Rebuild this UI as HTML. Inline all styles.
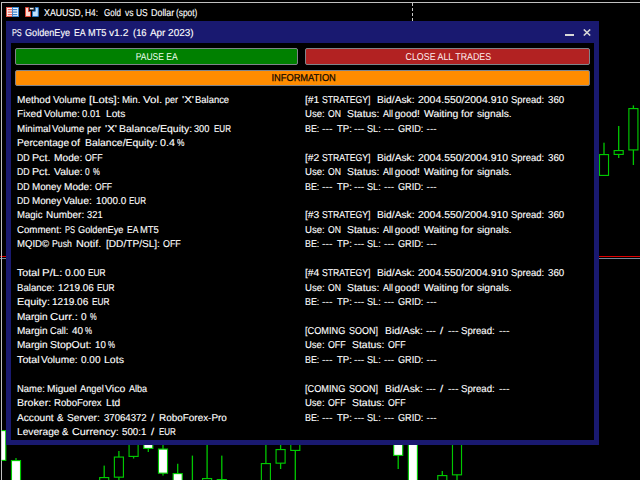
<!DOCTYPE html>
<html><head><meta charset="utf-8">
<style>
html,body{margin:0;padding:0;background:#000;width:640px;height:480px;overflow:hidden;position:relative;font-family:"Liberation Sans",sans-serif;}
.abs{position:absolute;}
#chart{position:absolute;left:0;top:0;width:640px;height:480px;}
#panel{position:absolute;left:6px;top:21px;width:593px;height:424px;background:#191970;}
#inner{position:absolute;left:5px;top:22px;width:583px;height:397px;background:#000;}
.btn{position:absolute;box-sizing:border-box;border:1px solid #80848a;border-radius:2px;font-size:10px;text-align:center;white-space:pre;text-rendering:geometricPrecision;}
.btn span{display:inline-block;}
.txt{position:absolute;font-size:10.0px;line-height:14.44px;color:#fff;white-space:pre;transform-origin:0 0;text-rendering:geometricPrecision;-webkit-text-stroke:0.12px #fff;}
</style></head>
<body>
<svg id="chart" width="640" height="480" viewBox="0 0 640 480" shape-rendering="crispEdges">
  <line x1="412.5" y1="3" x2="412.5" y2="21" stroke="#c8c8c8" stroke-width="1" stroke-dasharray="2.5,2.5"/>
  <rect x="0" y="256" width="640" height="1" fill="#e00000"/>
  <rect x="0" y="258" width="640" height="1" fill="#778899"/>
    <defs><clipPath id="cc"><rect x="1.6" y="3" width="640" height="480"/></clipPath></defs>
  <rect x="1" y="2" width="639" height="1" fill="#c0c0c0"/>
  <rect x="1" y="2" width="1" height="478" fill="#c0c0c0"/>
  <g id="candles" shape-rendering="geometricPrecision" clip-path="url(#cc)">
<rect x="-3.22" y="430.57" width="9.05" height="29.85" fill="#ffffff" stroke="#00c800" stroke-width="1.15"/>
<rect x="15.35" y="458" width="1.3" height="32.00" fill="#00c800"/>
<rect x="11.47" y="460.57" width="9.05" height="28.85" fill="#ffffff" stroke="#00c800" stroke-width="1.15"/>
<rect x="103.55" y="465.6" width="1.3" height="11.40" fill="#00c800"/>
<rect x="99.67" y="477.57" width="9.05" height="11.85" fill="#000000" stroke="#00c800" stroke-width="1.15"/>
<rect x="118.25" y="451" width="1.3" height="39.00" fill="#00c800"/>
<rect x="114.38" y="457.07" width="9.05" height="20.10" fill="#000000" stroke="#00c800" stroke-width="1.15"/>
<rect x="132.95" y="430" width="1.3" height="28.50" fill="#00c800"/>
<rect x="129.07" y="430.57" width="9.05" height="25.85" fill="#000000" stroke="#00c800" stroke-width="1.15"/>
<rect x="147.65" y="430" width="1.3" height="22.00" fill="#00c800"/>
<rect x="143.77" y="430.57" width="9.05" height="17.85" fill="#ffffff" stroke="#00c800" stroke-width="1.15"/>
<rect x="162.35" y="430" width="1.3" height="45.60" fill="#00c800"/>
<rect x="158.47" y="449.07" width="9.05" height="24.10" fill="#ffffff" stroke="#00c800" stroke-width="1.15"/>
<rect x="177.05" y="463.75" width="1.3" height="26.25" fill="#00c800"/>
<rect x="173.17" y="473.57" width="9.05" height="15.85" fill="#ffffff" stroke="#00c800" stroke-width="1.15"/>
<rect x="191.75" y="455.6" width="1.3" height="34.40" fill="#00c800"/>
<rect x="187.87" y="490.57" width="9.05" height="8.85" fill="#000000" stroke="#00c800" stroke-width="1.15"/>
<rect x="206.45" y="430" width="1.3" height="60.00" fill="#00c800"/>
<rect x="202.57" y="478.57" width="9.05" height="10.85" fill="#000000" stroke="#00c800" stroke-width="1.15"/>
<rect x="221.15" y="455.6" width="1.3" height="34.40" fill="#00c800"/>
<rect x="217.27" y="479.57" width="9.05" height="9.85" fill="#000000" stroke="#00c800" stroke-width="1.15"/>
<rect x="265.25" y="430" width="1.3" height="60.00" fill="#00c800"/>
<rect x="261.37" y="463.57" width="9.05" height="25.85" fill="#000000" stroke="#00c800" stroke-width="1.15"/>
<rect x="279.95" y="430" width="1.3" height="39.00" fill="#00c800"/>
<rect x="276.07" y="449.57" width="9.05" height="13.60" fill="#000000" stroke="#00c800" stroke-width="1.15"/>
<rect x="294.65" y="430" width="1.3" height="60.00" fill="#00c800"/>
<rect x="290.77" y="430.57" width="9.05" height="19.85" fill="#000000" stroke="#00c800" stroke-width="1.15"/>
<rect x="397.55" y="430" width="1.3" height="39.00" fill="#00c800"/>
<rect x="393.67" y="430.57" width="9.05" height="24.85" fill="#ffffff" stroke="#00c800" stroke-width="1.15"/>
<rect x="412.25" y="430" width="1.3" height="60.00" fill="#00c800"/>
<rect x="408.37" y="430.57" width="9.05" height="58.85" fill="#ffffff" stroke="#00c800" stroke-width="1.15"/>
<rect x="441.65" y="471" width="1.3" height="19.00" fill="#00c800"/>
<rect x="437.77" y="475.57" width="9.05" height="13.85" fill="#000000" stroke="#00c800" stroke-width="1.15"/>
<rect x="456.35" y="430" width="1.3" height="60.00" fill="#00c800"/>
<rect x="452.47" y="430.57" width="9.05" height="44.25" fill="#000000" stroke="#00c800" stroke-width="1.15"/>
<rect x="603.35" y="142.7" width="1.3" height="33.30" fill="#00c800"/>
<rect x="599.48" y="154.57" width="9.05" height="20.85" fill="#000000" stroke="#00c800" stroke-width="1.15"/>
<rect x="618.05" y="126" width="1.3" height="32.00" fill="#00c800"/>
<rect x="614.17" y="150.57" width="9.05" height="3.85" fill="#000000" stroke="#00c800" stroke-width="1.15"/>
<rect x="632.75" y="105.4" width="1.3" height="59.60" fill="#00c800"/>
<rect x="628.88" y="108.58" width="9.05" height="41.35" fill="#000000" stroke="#00c800" stroke-width="1.15"/>
</g>

</svg>
<!-- top icons -->
<svg class="abs" style="left:6px;top:7px" width="13" height="10" viewBox="0 0 13 10">
  <rect x="0.5" y="0.5" width="6" height="9" fill="#fff0ec" stroke="#e0584c"/>
  <rect x="6.5" y="0.5" width="6" height="9" fill="#e4f2fd" stroke="#3a88d0"/>
  <rect x="1.8" y="2.0" width="4.4" height="1.2" fill="#e8645a"/><rect x="1.8" y="4.5" width="4.4" height="1.2" fill="#e8645a"/><rect x="1.8" y="7.0" width="4.4" height="1.2" fill="#e8645a"/>
  <rect x="7.0" y="2.0" width="4.2" height="1.2" fill="#3a80c8"/><rect x="7.0" y="4.5" width="4.2" height="1.2" fill="#3a80c8"/><rect x="7.0" y="7.0" width="4.2" height="1.2" fill="#3a80c8"/>
</svg>
<svg class="abs" style="left:25px;top:7px" width="14" height="10" viewBox="0 0 14 10">
  <path d="M0.5 0.5 H3.5 V4.5 H5.5 V9.5 H0.5 Z" fill="#fdd8d0" stroke="#e04838"/>
  <rect x="4.3" y="0.3" width="4.8" height="2.6" fill="#505050"/>
  <rect x="5" y="1" width="3.4" height="1.2" fill="#f0f0f0"/>
  <path d="M13.3 0.5 V9.5 H7.5 V4.2 H10.3 V0.5 Z" fill="#c0e0fc" stroke="#2a7ccc"/>
</svg>

<div id="panel">
  <div class="abs" style="left:559px;top:13px;width:9px;height:2px;background:#d8d8d8"></div>
  <svg class="abs" style="left:577px;top:8px" width="8" height="7" viewBox="0 0 8 7"><path d="M0.8 0.5 L7.2 6.5 M7.2 0.5 L0.8 6.5" stroke="#d8d8d8" stroke-width="1.6"/></svg>
  <div id="inner"></div>
</div>

<div class="btn" style="left:15px;top:48px;width:283px;height:17px;background:#008000;color:#f0fff0;line-height:15px"><span style="transform:scaleX(0.85);position:relative;top:0.6px">PAUSE EA</span></div>
<div class="btn" style="left:305px;top:48px;width:285px;height:17px;background:#b22222;color:#fff0f0;line-height:15px"><span style="transform:scaleX(0.885);margin-left:2px;position:relative;top:0.6px">CLOSE ALL TRADES</span></div>
<div class="btn" style="left:15px;top:69.6px;width:575px;height:16px;background:#ff8c00;color:#100800;line-height:16.6px;-webkit-text-stroke:0.25px #100800"><span style="transform:scaleX(0.93);position:relative;top:0.8px;left:1px">INFORMATION</span></div>

<!--TEXT-->
<div class="txt" style="left:16.50px;top:93.90px;transform:scale(1.006,1.0)">Method</div>
<div class="txt" style="left:52.85px;top:93.90px;transform:scale(0.985,1.0)">Volume</div>
<div class="txt" style="left:88.60px;top:93.90px;transform:scale(1.133,1.0)">[Lots]:</div>
<div class="txt" style="left:121.90px;top:93.90px;transform:scale(0.972,1.0)">Min.</div>
<div class="txt" style="left:142.70px;top:93.90px;transform:scale(1.150,1.0)">Vol.</div>
<div class="txt" style="left:164.60px;top:93.90px;transform:scale(0.900,1.0)">per</div>
<div class="txt" style="left:181.85px;top:93.90px;transform:scale(1.150,1.0)">'X'</div>
<div class="txt" style="left:195.35px;top:93.90px;transform:scale(0.944,1.0)">Balance</div>
<div class="txt" style="left:16.50px;top:108.34px;transform:scale(1.021,1.0)">Fixed</div>
<div class="txt" style="left:43.50px;top:108.34px;transform:scale(0.989,1.0)">Volume:</div>
<div class="txt" style="left:82.20px;top:108.34px;transform:scale(0.945,1.0)">0.01</div>
<div class="txt" style="left:105.50px;top:108.34px;transform:scale(1.018,1.0)">Lots</div>
<div class="txt" style="left:16.50px;top:122.78px;transform:scale(0.976,1.0)">Minimal</div>
<div class="txt" style="left:52.20px;top:122.78px;transform:scale(0.967,1.0)">Volume</div>
<div class="txt" style="left:87.30px;top:122.78px;transform:scale(0.960,1.0)">per</div>
<div class="txt" style="left:104.85px;top:122.78px;transform:scale(1.150,1.0)">'X'</div>
<div class="txt" style="left:118.60px;top:122.78px;transform:scale(1.052,1.0)">Balance/Equity:</div>
<div class="txt" style="left:194.35px;top:122.78px;transform:scale(0.921,1.0)">300</div>
<div class="txt" style="left:213.70px;top:122.78px;transform:scale(0.805,1.0)">EUR</div>
<div class="txt" style="left:16.50px;top:137.22px;transform:scale(1.020,1.0)">Percentage</div>
<div class="txt" style="left:71.35px;top:137.22px;transform:scale(1.072,1.0)">of</div>
<div class="txt" style="left:84.60px;top:137.22px;transform:scale(1.042,1.0)">Balance/Equity:</div>
<div class="txt" style="left:160.20px;top:137.22px;transform:scale(1.071,1.0)">0.4</div>
<div class="txt" style="left:177.10px;top:137.22px;transform:scale(0.833,1.0)">%</div>
<div class="txt" style="left:16.70px;top:151.66px;transform:scale(0.873,1.0)">DD</div>
<div class="txt" style="left:32.20px;top:151.66px;transform:scale(1.068,1.0)">Pct.</div>
<div class="txt" style="left:53.50px;top:151.66px;transform:scale(1.019,1.0)">Mode:</div>
<div class="txt" style="left:84.60px;top:151.66px;transform:scale(0.875,1.0)">OFF</div>
<div class="txt" style="left:16.70px;top:166.10px;transform:scale(0.873,1.0)">DD</div>
<div class="txt" style="left:32.20px;top:166.10px;transform:scale(1.068,1.0)">Pct.</div>
<div class="txt" style="left:53.50px;top:166.10px;transform:scale(1.041,1.0)">Value:</div>
<div class="txt" style="left:85.20px;top:166.10px;transform:scale(0.833,1.0)">0</div>
<div class="txt" style="left:92.70px;top:166.10px;transform:scale(0.767,1.0)">%</div>
<div class="txt" style="left:16.70px;top:180.54px;transform:scale(0.873,1.0)">DD</div>
<div class="txt" style="left:31.60px;top:180.54px;transform:scale(0.980,1.0)">Money</div>
<div class="txt" style="left:63.50px;top:180.54px;transform:scale(1.007,1.0)">Mode:</div>
<div class="txt" style="left:94.60px;top:180.54px;transform:scale(0.855,1.0)">OFF</div>
<div class="txt" style="left:16.70px;top:194.98px;transform:scale(0.873,1.0)">DD</div>
<div class="txt" style="left:31.60px;top:194.98px;transform:scale(0.980,1.0)">Money</div>
<div class="txt" style="left:62.85px;top:194.98px;transform:scale(1.046,1.0)">Value:</div>
<div class="txt" style="left:95.50px;top:194.98px;transform:scale(0.987,1.0)">1000.0</div>
<div class="txt" style="left:129.20px;top:194.98px;transform:scale(0.805,1.0)">EUR</div>
<div class="txt" style="left:16.50px;top:209.42px;transform:scale(0.952,1.0)">Magic</div>
<div class="txt" style="left:45.60px;top:209.42px;transform:scale(0.995,1.0)">Number:</div>
<div class="txt" style="left:86.60px;top:209.42px;transform:scale(0.935,1.0)">321</div>
<div class="txt" style="left:16.50px;top:223.86px;transform:scale(0.967,1.0)">Comment:</div>
<div class="txt" style="left:64.70px;top:223.86px;transform:scale(0.750,1.0)">PS</div>
<div class="txt" style="left:77.60px;top:223.86px;transform:scale(0.918,1.0)">GoldenEye</div>
<div class="txt" style="left:126.85px;top:223.86px;transform:scale(0.846,1.0)">EA</div>
<div class="txt" style="left:140.20px;top:223.86px;transform:scale(0.940,1.0)">MT5</div>
<div class="txt" style="left:16.50px;top:238.30px;transform:scale(0.959,1.0)">MQID©</div>
<div class="txt" style="left:51.60px;top:238.30px;transform:scale(0.870,1.0)">Push</div>
<div class="txt" style="left:75.70px;top:238.30px;transform:scale(1.078,1.0)">Notif.</div>
<div class="txt" style="left:105.70px;top:238.30px;transform:scale(1.011,1.0)">[DD/TP/SL]:</div>
<div class="txt" style="left:163.10px;top:238.30px;transform:scale(0.890,1.0)">OFF</div>
<div class="txt" style="left:16.90px;top:267.18px;transform:scale(1.071,1.0)">Total</div>
<div class="txt" style="left:41.90px;top:267.18px;transform:scale(1.147,1.0)">P/L:</div>
<div class="txt" style="left:64.60px;top:267.18px;transform:scale(1.030,1.0)">0.00</div>
<div class="txt" style="left:87.70px;top:267.18px;transform:scale(0.833,1.0)">EUR</div>
<div class="txt" style="left:16.60px;top:281.62px;transform:scale(0.962,1.0)">Balance:</div>
<div class="txt" style="left:57.85px;top:281.62px;transform:scale(0.993,1.0)">1219.06</div>
<div class="txt" style="left:97.10px;top:281.62px;transform:scale(0.833,1.0)">EUR</div>
<div class="txt" style="left:16.60px;top:296.06px;transform:scale(1.075,1.0)">Equity:</div>
<div class="txt" style="left:52.20px;top:296.06px;transform:scale(1.004,1.0)">1219.06</div>
<div class="txt" style="left:91.50px;top:296.06px;transform:scale(0.833,1.0)">EUR</div>
<div class="txt" style="left:16.50px;top:310.50px;transform:scale(1.003,1.0)">Margin</div>
<div class="txt" style="left:50.40px;top:310.50px;transform:scale(1.137,1.0)">Curr.:</div>
<div class="txt" style="left:81.00px;top:310.50px;transform:scale(1.000,1.0)">0</div>
<div class="txt" style="left:89.50px;top:310.50px;transform:scale(0.750,1.0)">%</div>
<div class="txt" style="left:16.50px;top:324.94px;transform:scale(1.003,1.0)">Margin</div>
<div class="txt" style="left:50.20px;top:324.94px;transform:scale(0.920,1.0)">Call:</div>
<div class="txt" style="left:71.80px;top:324.94px;transform:scale(0.991,1.0)">40</div>
<div class="txt" style="left:85.40px;top:324.94px;transform:scale(0.789,1.0)">%</div>
<div class="txt" style="left:16.50px;top:339.38px;transform:scale(1.003,1.0)">Margin</div>
<div class="txt" style="left:49.70px;top:339.38px;transform:scale(1.051,1.0)">StopOut:</div>
<div class="txt" style="left:94.70px;top:339.38px;transform:scale(0.968,1.0)">10</div>
<div class="txt" style="left:107.60px;top:339.38px;transform:scale(0.789,1.0)">%</div>
<div class="txt" style="left:16.50px;top:353.82px;transform:scale(1.076,1.0)">Total</div>
<div class="txt" style="left:41.35px;top:353.82px;transform:scale(1.013,1.0)">Volume:</div>
<div class="txt" style="left:81.00px;top:353.82px;transform:scale(1.000,1.0)">0.00</div>
<div class="txt" style="left:103.50px;top:353.82px;transform:scale(1.053,1.0)">Lots</div>
<div class="txt" style="left:16.50px;top:382.70px;transform:scale(0.943,1.0)">Name:</div>
<div class="txt" style="left:47.20px;top:382.70px;transform:scale(1.014,1.0)">Miguel</div>
<div class="txt" style="left:79.70px;top:382.70px;transform:scale(0.926,1.0)">Angel</div>
<div class="txt" style="left:104.70px;top:382.70px;transform:scale(1.053,1.0)">Vico</div>
<div class="txt" style="left:128.50px;top:382.70px;transform:scale(0.905,1.0)">Alba</div>
<div class="txt" style="left:16.50px;top:397.14px;transform:scale(1.058,1.0)">Broker:</div>
<div class="txt" style="left:54.10px;top:397.14px;transform:scale(0.962,1.0)">RoboForex</div>
<div class="txt" style="left:106.00px;top:397.14px;transform:scale(1.025,1.0)">Ltd</div>
<div class="txt" style="left:16.50px;top:411.58px;transform:scale(1.014,1.0)">Account</div>
<div class="txt" style="left:56.80px;top:411.58px;transform:scale(0.971,1.0)">&amp;</div>
<div class="txt" style="left:66.50px;top:411.58px;transform:scale(1.019,1.0)">Server:</div>
<div class="txt" style="left:103.50px;top:411.58px;transform:scale(0.958,1.0)">37064372</div>
<div class="txt" style="left:150.90px;top:411.58px;transform:scale(1.150,1.0)">/</div>
<div class="txt" style="left:159.00px;top:411.58px;transform:scale(0.993,1.0)">RoboForex-Pro</div>
<div class="txt" style="left:16.50px;top:426.02px;transform:scale(1.019,1.0)">Leverage</div>
<div class="txt" style="left:62.40px;top:426.02px;transform:scale(0.943,1.0)">&amp;</div>
<div class="txt" style="left:72.10px;top:426.02px;transform:scale(1.079,1.0)">Currency:</div>
<div class="txt" style="left:122.20px;top:426.02px;transform:scale(0.976,1.0)">500:1</div>
<div class="txt" style="left:150.90px;top:426.02px;transform:scale(1.150,1.0)">/</div>
<div class="txt" style="left:159.00px;top:426.02px;transform:scale(0.800,1.0)">EUR</div>
<div class="txt" style="left:305.10px;top:93.90px;transform:scale(1.029,1.0)">[#1</div>
<div class="txt" style="left:322.00px;top:93.90px;transform:scale(0.866,1.0)">STRATEGY]</div>
<div class="txt" style="left:377.25px;top:93.90px;transform:scale(1.024,1.0)">Bid/Ask:</div>
<div class="txt" style="left:418.00px;top:93.90px;transform:scale(1.045,1.0)">2004.550/2004.910</div>
<div class="txt" style="left:511.00px;top:93.90px;transform:scale(0.946,1.0)">Spread:</div>
<div class="txt" style="left:548.25px;top:93.90px;transform:scale(0.971,1.0)">360</div>
<div class="txt" style="left:305.10px;top:108.34px;transform:scale(0.960,1.0)">Use:</div>
<div class="txt" style="left:328.20px;top:108.34px;transform:scale(0.860,1.0)">ON</div>
<div class="txt" style="left:347.10px;top:108.34px;transform:scale(1.042,1.0)">Status:</div>
<div class="txt" style="left:382.70px;top:108.34px;transform:scale(0.900,1.0)">All</div>
<div class="txt" style="left:394.80px;top:108.34px;transform:scale(1.000,1.0)">good!</div>
<div class="txt" style="left:423.70px;top:108.34px;transform:scale(1.042,1.0)">Waiting</div>
<div class="txt" style="left:461.25px;top:108.34px;transform:scale(1.042,1.0)">for</div>
<div class="txt" style="left:476.90px;top:108.34px;transform:scale(1.021,1.0)">signals.</div>
<div class="txt" style="left:305.10px;top:122.78px;transform:scale(0.887,1.0)">BE:</div>
<div class="txt" style="left:322.30px;top:122.78px;transform:scale(1.060,1.0)">---</div>
<div class="txt" style="left:336.60px;top:122.78px;transform:scale(0.960,1.0)">TP:</div>
<div class="txt" style="left:354.00px;top:122.78px;transform:scale(1.030,1.0)">---</div>
<div class="txt" style="left:366.60px;top:122.78px;transform:scale(0.913,1.0)">SL:</div>
<div class="txt" style="left:384.10px;top:122.78px;transform:scale(1.000,1.0)">---</div>
<div class="txt" style="left:397.90px;top:122.78px;transform:scale(0.911,1.0)">GRID:</div>
<div class="txt" style="left:426.60px;top:122.78px;transform:scale(1.000,1.0)">---</div>
<div class="txt" style="left:305.10px;top:151.66px;transform:scale(1.029,1.0)">[#2</div>
<div class="txt" style="left:322.00px;top:151.66px;transform:scale(0.866,1.0)">STRATEGY]</div>
<div class="txt" style="left:377.25px;top:151.66px;transform:scale(1.024,1.0)">Bid/Ask:</div>
<div class="txt" style="left:418.00px;top:151.66px;transform:scale(1.045,1.0)">2004.550/2004.910</div>
<div class="txt" style="left:511.00px;top:151.66px;transform:scale(0.946,1.0)">Spread:</div>
<div class="txt" style="left:548.25px;top:151.66px;transform:scale(0.971,1.0)">360</div>
<div class="txt" style="left:305.10px;top:166.10px;transform:scale(0.960,1.0)">Use:</div>
<div class="txt" style="left:328.20px;top:166.10px;transform:scale(0.860,1.0)">ON</div>
<div class="txt" style="left:347.10px;top:166.10px;transform:scale(1.042,1.0)">Status:</div>
<div class="txt" style="left:382.70px;top:166.10px;transform:scale(0.900,1.0)">All</div>
<div class="txt" style="left:394.80px;top:166.10px;transform:scale(1.000,1.0)">good!</div>
<div class="txt" style="left:423.70px;top:166.10px;transform:scale(1.042,1.0)">Waiting</div>
<div class="txt" style="left:461.25px;top:166.10px;transform:scale(1.042,1.0)">for</div>
<div class="txt" style="left:476.90px;top:166.10px;transform:scale(1.021,1.0)">signals.</div>
<div class="txt" style="left:305.10px;top:180.54px;transform:scale(0.887,1.0)">BE:</div>
<div class="txt" style="left:322.30px;top:180.54px;transform:scale(1.060,1.0)">---</div>
<div class="txt" style="left:336.60px;top:180.54px;transform:scale(0.960,1.0)">TP:</div>
<div class="txt" style="left:354.00px;top:180.54px;transform:scale(1.030,1.0)">---</div>
<div class="txt" style="left:366.60px;top:180.54px;transform:scale(0.913,1.0)">SL:</div>
<div class="txt" style="left:384.10px;top:180.54px;transform:scale(1.000,1.0)">---</div>
<div class="txt" style="left:397.90px;top:180.54px;transform:scale(0.911,1.0)">GRID:</div>
<div class="txt" style="left:426.60px;top:180.54px;transform:scale(1.000,1.0)">---</div>
<div class="txt" style="left:305.10px;top:209.42px;transform:scale(1.029,1.0)">[#3</div>
<div class="txt" style="left:322.00px;top:209.42px;transform:scale(0.866,1.0)">STRATEGY]</div>
<div class="txt" style="left:377.25px;top:209.42px;transform:scale(1.024,1.0)">Bid/Ask:</div>
<div class="txt" style="left:418.00px;top:209.42px;transform:scale(1.045,1.0)">2004.550/2004.910</div>
<div class="txt" style="left:511.00px;top:209.42px;transform:scale(0.946,1.0)">Spread:</div>
<div class="txt" style="left:548.25px;top:209.42px;transform:scale(0.971,1.0)">360</div>
<div class="txt" style="left:305.10px;top:223.86px;transform:scale(0.960,1.0)">Use:</div>
<div class="txt" style="left:328.20px;top:223.86px;transform:scale(0.860,1.0)">ON</div>
<div class="txt" style="left:347.10px;top:223.86px;transform:scale(1.042,1.0)">Status:</div>
<div class="txt" style="left:382.70px;top:223.86px;transform:scale(0.900,1.0)">All</div>
<div class="txt" style="left:394.80px;top:223.86px;transform:scale(1.000,1.0)">good!</div>
<div class="txt" style="left:423.70px;top:223.86px;transform:scale(1.042,1.0)">Waiting</div>
<div class="txt" style="left:461.25px;top:223.86px;transform:scale(1.042,1.0)">for</div>
<div class="txt" style="left:476.90px;top:223.86px;transform:scale(1.021,1.0)">signals.</div>
<div class="txt" style="left:305.10px;top:238.30px;transform:scale(0.887,1.0)">BE:</div>
<div class="txt" style="left:322.30px;top:238.30px;transform:scale(1.060,1.0)">---</div>
<div class="txt" style="left:336.60px;top:238.30px;transform:scale(0.960,1.0)">TP:</div>
<div class="txt" style="left:354.00px;top:238.30px;transform:scale(1.030,1.0)">---</div>
<div class="txt" style="left:366.60px;top:238.30px;transform:scale(0.913,1.0)">SL:</div>
<div class="txt" style="left:384.10px;top:238.30px;transform:scale(1.000,1.0)">---</div>
<div class="txt" style="left:397.90px;top:238.30px;transform:scale(0.911,1.0)">GRID:</div>
<div class="txt" style="left:426.60px;top:238.30px;transform:scale(1.000,1.0)">---</div>
<div class="txt" style="left:305.10px;top:267.18px;transform:scale(1.029,1.0)">[#4</div>
<div class="txt" style="left:322.00px;top:267.18px;transform:scale(0.866,1.0)">STRATEGY]</div>
<div class="txt" style="left:377.25px;top:267.18px;transform:scale(1.024,1.0)">Bid/Ask:</div>
<div class="txt" style="left:418.00px;top:267.18px;transform:scale(1.045,1.0)">2004.550/2004.910</div>
<div class="txt" style="left:511.00px;top:267.18px;transform:scale(0.946,1.0)">Spread:</div>
<div class="txt" style="left:548.25px;top:267.18px;transform:scale(0.971,1.0)">360</div>
<div class="txt" style="left:305.10px;top:281.62px;transform:scale(0.960,1.0)">Use:</div>
<div class="txt" style="left:328.20px;top:281.62px;transform:scale(0.860,1.0)">ON</div>
<div class="txt" style="left:347.10px;top:281.62px;transform:scale(1.042,1.0)">Status:</div>
<div class="txt" style="left:382.70px;top:281.62px;transform:scale(0.900,1.0)">All</div>
<div class="txt" style="left:394.80px;top:281.62px;transform:scale(1.000,1.0)">good!</div>
<div class="txt" style="left:423.70px;top:281.62px;transform:scale(1.042,1.0)">Waiting</div>
<div class="txt" style="left:461.25px;top:281.62px;transform:scale(1.042,1.0)">for</div>
<div class="txt" style="left:476.90px;top:281.62px;transform:scale(1.021,1.0)">signals.</div>
<div class="txt" style="left:305.10px;top:296.06px;transform:scale(0.887,1.0)">BE:</div>
<div class="txt" style="left:322.30px;top:296.06px;transform:scale(1.060,1.0)">---</div>
<div class="txt" style="left:336.60px;top:296.06px;transform:scale(0.960,1.0)">TP:</div>
<div class="txt" style="left:354.00px;top:296.06px;transform:scale(1.030,1.0)">---</div>
<div class="txt" style="left:366.60px;top:296.06px;transform:scale(0.913,1.0)">SL:</div>
<div class="txt" style="left:384.10px;top:296.06px;transform:scale(1.000,1.0)">---</div>
<div class="txt" style="left:397.90px;top:296.06px;transform:scale(0.911,1.0)">GRID:</div>
<div class="txt" style="left:426.60px;top:296.06px;transform:scale(1.000,1.0)">---</div>
<div class="txt" style="left:305.30px;top:324.94px;transform:scale(0.919,1.0)">[COMING</div>
<div class="txt" style="left:348.90px;top:324.94px;transform:scale(0.897,1.0)">SOON]</div>
<div class="txt" style="left:384.50px;top:324.94px;transform:scale(1.031,1.0)">Bid/Ask:</div>
<div class="txt" style="left:425.90px;top:324.94px;transform:scale(1.000,1.0)">---</div>
<div class="txt" style="left:439.50px;top:324.94px;transform:scale(1.150,1.0)">/</div>
<div class="txt" style="left:447.50px;top:324.94px;transform:scale(1.060,1.0)">---</div>
<div class="txt" style="left:461.25px;top:324.94px;transform:scale(0.964,1.0)">Spread:</div>
<div class="txt" style="left:498.75px;top:324.94px;transform:scale(1.065,1.0)">---</div>
<div class="txt" style="left:305.30px;top:339.38px;transform:scale(0.950,1.0)">Use:</div>
<div class="txt" style="left:327.80px;top:339.38px;transform:scale(0.880,1.0)">OFF</div>
<div class="txt" style="left:351.50px;top:339.38px;transform:scale(1.042,1.0)">Status:</div>
<div class="txt" style="left:388.10px;top:339.38px;transform:scale(0.875,1.0)">OFF</div>
<div class="txt" style="left:305.10px;top:353.82px;transform:scale(0.887,1.0)">BE:</div>
<div class="txt" style="left:322.30px;top:353.82px;transform:scale(1.060,1.0)">---</div>
<div class="txt" style="left:336.60px;top:353.82px;transform:scale(0.960,1.0)">TP:</div>
<div class="txt" style="left:354.00px;top:353.82px;transform:scale(1.030,1.0)">---</div>
<div class="txt" style="left:366.60px;top:353.82px;transform:scale(0.913,1.0)">SL:</div>
<div class="txt" style="left:384.10px;top:353.82px;transform:scale(1.000,1.0)">---</div>
<div class="txt" style="left:397.90px;top:353.82px;transform:scale(0.911,1.0)">GRID:</div>
<div class="txt" style="left:426.60px;top:353.82px;transform:scale(1.000,1.0)">---</div>
<div class="txt" style="left:305.30px;top:382.70px;transform:scale(0.919,1.0)">[COMING</div>
<div class="txt" style="left:348.90px;top:382.70px;transform:scale(0.897,1.0)">SOON]</div>
<div class="txt" style="left:384.50px;top:382.70px;transform:scale(1.031,1.0)">Bid/Ask:</div>
<div class="txt" style="left:425.90px;top:382.70px;transform:scale(1.000,1.0)">---</div>
<div class="txt" style="left:439.50px;top:382.70px;transform:scale(1.150,1.0)">/</div>
<div class="txt" style="left:447.50px;top:382.70px;transform:scale(1.060,1.0)">---</div>
<div class="txt" style="left:461.25px;top:382.70px;transform:scale(0.964,1.0)">Spread:</div>
<div class="txt" style="left:498.75px;top:382.70px;transform:scale(1.065,1.0)">---</div>
<div class="txt" style="left:305.30px;top:397.14px;transform:scale(0.950,1.0)">Use:</div>
<div class="txt" style="left:327.80px;top:397.14px;transform:scale(0.880,1.0)">OFF</div>
<div class="txt" style="left:351.50px;top:397.14px;transform:scale(1.042,1.0)">Status:</div>
<div class="txt" style="left:388.10px;top:397.14px;transform:scale(0.875,1.0)">OFF</div>
<div class="txt" style="left:305.10px;top:411.58px;transform:scale(0.887,1.0)">BE:</div>
<div class="txt" style="left:322.30px;top:411.58px;transform:scale(1.060,1.0)">---</div>
<div class="txt" style="left:336.60px;top:411.58px;transform:scale(0.960,1.0)">TP:</div>
<div class="txt" style="left:354.00px;top:411.58px;transform:scale(1.030,1.0)">---</div>
<div class="txt" style="left:366.60px;top:411.58px;transform:scale(0.913,1.0)">SL:</div>
<div class="txt" style="left:384.10px;top:411.58px;transform:scale(1.000,1.0)">---</div>
<div class="txt" style="left:397.90px;top:411.58px;transform:scale(0.911,1.0)">GRID:</div>
<div class="txt" style="left:426.60px;top:411.58px;transform:scale(1.000,1.0)">---</div>
<div class="txt" style="left:43.75px;top:6.90px;line-height:14px;transform:scaleX(0.881)">XAUUSD,</div>
<div class="txt" style="left:85.00px;top:6.90px;line-height:14px;transform:scaleX(0.833)">H4:</div>
<div class="txt" style="left:104.40px;top:6.90px;line-height:14px;transform:scaleX(0.802)">Gold</div>
<div class="txt" style="left:125.00px;top:6.90px;line-height:14px;transform:scaleX(0.850)">vs</div>
<div class="txt" style="left:136.25px;top:6.90px;line-height:14px;transform:scaleX(0.846)">US</div>
<div class="txt" style="left:150.60px;top:6.90px;line-height:14px;transform:scaleX(0.890)">Dollar</div>
<div class="txt" style="left:175.60px;top:6.90px;line-height:14px;transform:scaleX(0.836)">(spot)</div>
<div class="txt" style="left:12.40px;top:26.90px;line-height:14px;transform:scaleX(0.729)">PS</div>
<div class="txt" style="left:25.00px;top:26.90px;line-height:14px;transform:scaleX(0.910)">GoldenEye</div>
<div class="txt" style="left:74.20px;top:26.90px;line-height:14px;transform:scaleX(0.879)">EA</div>
<div class="txt" style="left:87.60px;top:26.90px;line-height:14px;transform:scaleX(0.920)">MT5</div>
<div class="txt" style="left:109.30px;top:26.90px;line-height:14px;transform:scaleX(1.024)">v1.2</div>
<div class="txt" style="left:132.50px;top:26.90px;line-height:14px;transform:scaleX(0.940)">(16</div>
<div class="txt" style="left:149.75px;top:26.90px;line-height:14px;transform:scaleX(0.991)">Apr</div>
<div class="txt" style="left:168.10px;top:26.90px;line-height:14px;transform:scaleX(1.000)">2023)</div>
<!--/TEXT-->
</body></html>
